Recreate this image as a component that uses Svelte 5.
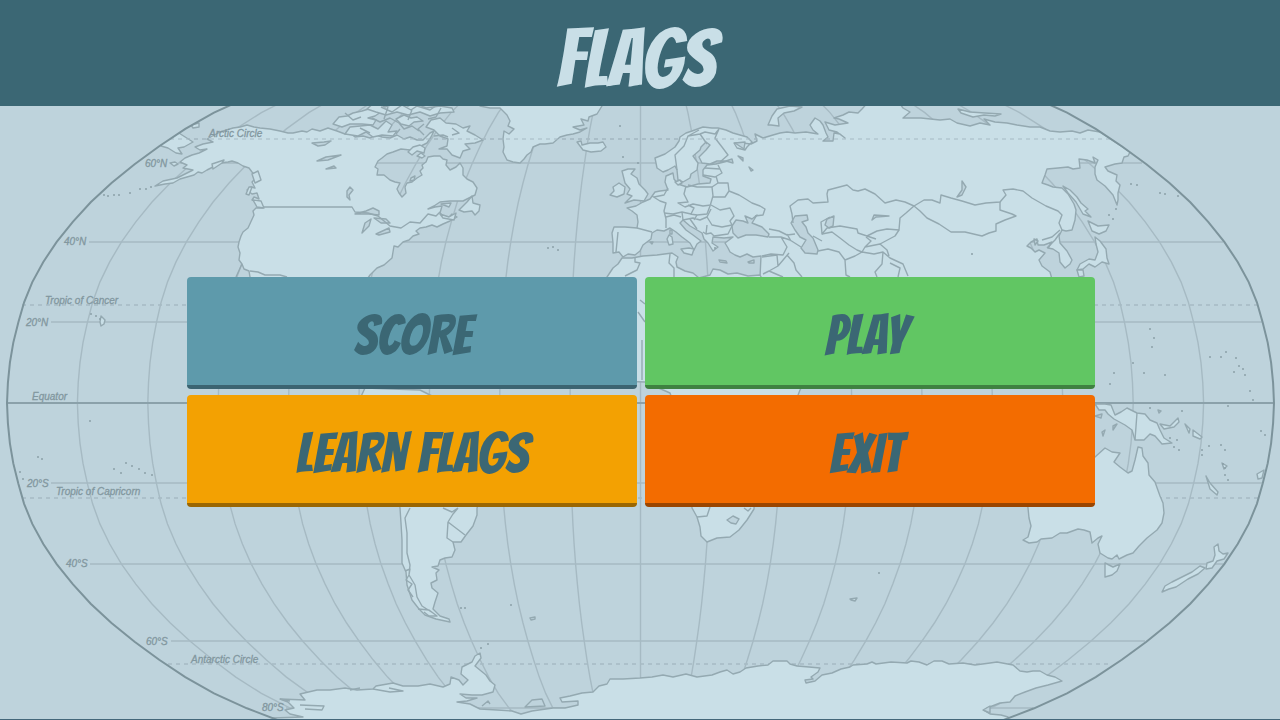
<script>
  const buttons = [
    { label: "Score", kind: "score" },
    { label: "Play", kind: "play" },
    { label: "Learn flags", kind: "learn" },
    { label: "Exit", kind: "exit" },
  ];

  let selected = $state("");

  // Robinson projection table, one entry per 5 degrees of latitude
  const lengths = [1, 0.9986, 0.9954, 0.99, 0.9822, 0.973, 0.96, 0.9427, 0.9216, 0.8962,
    0.8679, 0.835, 0.7986, 0.7597, 0.7186, 0.6732, 0.6213, 0.5722, 0.5322];
  const heights = [0, 0.062, 0.124, 0.186, 0.248, 0.31, 0.372, 0.434, 0.4958, 0.5571,
    0.6176, 0.6769, 0.7346, 0.7903, 0.8435, 0.8936, 0.9394, 0.9761, 1];
  const centerX = 640.5;
  const centerY = 403;

  function meridian(lon) {
    const points = [];
    for (let i = -18; i <= 18; i++) {
      const step = Math.abs(i);
      const x = centerX + (633.5 * lengths[step] * lon) / 180;
      const y = centerY + 325 * heights[step] * Math.sign(i);
      points.push(`${x.toFixed(1)} ${y.toFixed(1)}`);
    }
    return points;
  }

  const globe = "M" + meridian(-180).join("L") + "L" + meridian(180).reverse().join("L") + "Z";

  const meridians = [];
  for (let lon = -160; lon <= 160; lon += 20) {
    meridians.push("M" + meridian(lon).join("L"));
  }

  const parallels = [
    { y: 163, from: 178, to: 1142 },
    { y: 242, from: 89, to: 1223 },
    { y: 322, from: 51, to: 1262 },
    { y: 483, from: 51, to: 1262 },
    { y: 564, from: 90, to: 1224 },
    { y: 641, from: 171, to: 1145 },
    { y: 708, from: 286, to: 1033 },
  ];

  const circles = [
    { y: 139, from: 170, to: 1110 },
    { y: 305, from: 22, to: 1258 },
    { y: 498, from: 22, to: 1258 },
    { y: 664, from: 168, to: 1112 },
  ];

  const labels = [
    { text: "Arctic Circle", x: 209, y: 137 },
    { text: "60°N", x: 145, y: 167 },
    { text: "40°N", x: 64, y: 245 },
    { text: "Tropic of Cancer", x: 45, y: 304 },
    { text: "20°N", x: 26, y: 326 },
    { text: "Equator", x: 32, y: 400 },
    { text: "20°S", x: 27, y: 487 },
    { text: "Tropic of Capricorn", x: 56, y: 495 },
    { text: "40°S", x: 66, y: 567 },
    { text: "60°S", x: 146, y: 645 },
    { text: "Antarctic Circle", x: 191, y: 663 },
    { text: "80°S", x: 262, y: 711 },
  ];

  const land = [
    // North America
    "M233 128L240 127 247 125 254 127 260 128 270 129 280 131 288 133 293 133 302 131 307 132 312 129 320 131 328 128 337 131 345 134 350 133 355 137 363 136 370 138 376 135 382 137 390 138 397 135 404 139 410 137 417 140 423 140 430 133 434 131 431 137 427 143 419 147 410 150 401 149 393 152 387 154 382 158 378 161 375 167 378 169 377 175 384 175 390 180 395 182 400 183 397 189 399 193 402 197 406 193 405 187 407 183 412 182 417 178 422 175 420 171 423 168 422 165 426 162 428 157 434 156 440 156 443 159 447 160 446 165 450 170 456 167 460 163 463 168 463 175 467 179 473 182 477 188 475 195 469 198 463 201 450 201 440 202 434 206 428 209 435 207 442 206 440 213 444 217 448 218 452 214 457 217 450 221 443 224 437 227 432 225 426 227 420 228 416 231 419 234 413 236 409 240 403 242 398 247 394 246 393 252 392 258 384 265 377 268 370 275 360 290 260 290 250 277 249 271 244 269 242 264 239 260 240 253 238 247 239 242 241 236 243 232 248 228 254 215 253 211 256 208 263 208 260 203 252 200 254 197 259 199 257 193 252 194 247 190 251 187 255 188 252 182 257 177 252 172 249 168 243 166 238 163 232 161 228 162 220 163 213 167 207 170 202 173 198 172 194 175 187 177 180 179 173 183 165 184 155 186 163 181 177 178 185 174 193 170 183 168 187 165 180 162 185 158 192 155 199 153 207 149 200 150 195 147 203 144 213 142 207 139 220 132Z",
    // Arctic islands
    "M333 124L339 117 347 116 353 113 362 111 372 108 381 112 375 116 368 118 376 120 373 125 362 124 350 124 342 127Z",
    "M345 134L350 127 360 126 370 125 378 129 386 121 392 125 388 132 397 131 393 136 382 135 373 137 366 132 358 136Z",
    "M367 109L375 102 385 107 397 103 408 106 415 103 426 108 440 106 452 108 454 112 440 113 430 116 420 112 408 115 397 112 386 115 376 112Z",
    "M396 119L404 115 411 118 417 117 423 121 414 122 409 126 401 124Z",
    "M431 120L440 118 446 123 456 124 463 128 470 126 467 131 475 135 483 140 475 143 465 144 470 149 463 151 460 158 452 155 447 149 439 149 447 146 448 139 440 136 434 130 426 127Z",
    "M408 152L413 147 420 145 425 148 424 153 417 151 412 155Z",
    "M417 156L421 153 425 156 422 158ZM411 178L415 176 414 180 410 181Z",
    "M459 210L467 202 472 196 473 203 480 205 479 211 475 215 472 211 464 212Z",
    "M441 204L451 203 449 207ZM440 214L449 217 456 213 454 220 443 218Z",
    "M249 187L246 194 249 195 252 187ZM252 174L258 171 261 180 255 183ZM253 200L261 201 264 208 257 207Z",
    "M160 134L171 128 182 135 193 142 184 147 178 148 182 154 176 153 168 148 161 146Z",
    "M170 163L175 162 178 164 174 166ZM212 164L224 160 222 163 213 169ZM191 125L199 123 199 127 193 128Z",
    // Greenland, Iceland, British Isles
    "M480 106L490 108 500 108 507 115 510 121 508 126 514 129 509 134 504 131 503 139 504 147 503 152 507 160 513 162 520 163 524 159 527 155 531 152 533 147 540 144 545 144 553 143 560 137 567 135 573 134 580 132 587 128 580 130 573 127 584 125 581 119 588 121 589 117 597 114 602 106 603 100 480 100Z",
    "M577 142L581 141 582 145 590 143 598 143 603 142 606 147 601 151 591 152 583 150Z",
    "M622 171L628 169 635 169 631 174 637 178 639 184 645 190 648 194 644 201 634 200 625 203 632 196 627 194 630 189 625 183Z",
    "M613 187L619 183 625 187 624 194 617 197 610 195 614 191Z",
    // Europe and Asia
    "M655 158L665 154 675 147 679 141 680 137 686 133 692 131 703 127 712 128 718 128 726 130 733 133 747 137 752 142 747 147 745 150 737 148 734 143 742 143 751 144 757 141 755 134 763 138 773 135 780 133 787 132 795 133 806 132 818 134 813 130 810 125 815 118 820 121 823 125 826 133 828 137 823 141 833 141 834 133 840 134 845 138 837 132 829 130 825 122 835 125 848 123 839 119 834 118 843 115 849 112 858 113 862 109 870 100 897 100 903 108 910 112 903 118 921 118 940 120 950 119 957 123 970 126 980 123 990 125 984 119 995 122 1007 123 1017 125 1030 127 1040 127 1050 131 1060 132 1072 131 1080 133 1088 130 1100 132 1115 142 1130 152 1128 156 1124 157 1122 163 1115 164 1105 167 1108 171 1117 175 1116 181 1120 185 1118 193 1118 200 1117 205 1113 195 1105 186 1097 180 1095 174 1095 167 1098 160 1093 157 1095 163 1087 160 1079 159 1080 168 1073 169 1068 167 1058 168 1047 169 1045 175 1042 183 1048 185 1053 187 1062 188 1068 194 1074 204 1076 210 1075 220 1072 230 1066 231 1062 230 1059 236 1060 243 1067 251 1072 260 1070 264 1065 268 1060 262 1059 253 1053 249 1048 248 1052 242 1044 245 1038 245 1037 239 1031 242 1027 246 1031 248 1035 252 1039 250 1045 253 1039 260 1042 266 1050 272 1055 290 760 290 760 277 761 256 753 257 747 254 740 257 735 255 730 252 728 248 725 243 733 237 724 238 713 237 712 243 718 247 713 251 708 243 704 239 702 233 697 230 690 226 683 220 680 223 686 230 693 235 701 241 697 244 694 250 690 243 682 237 676 232 670 228 664 231 657 230 652 233 651 239 643 245 640 251 635 255 628 254 623 257 619 252 613 253 613 243 612 233 614 227 625 227 637 228 638 222 637 215 632 211 627 208 636 206 643 202 650 199 655 192 660 191 668 190 665 182 666 176 673 173 674 179 678 184 687 187 698 184 710 183 711 179 703 176 703 170 707 165 716 164 728 161 717 161 710 164 702 163 699 157 706 150 710 145 706 142 701 147 700 150 693 156 698 163 697 170 691 174 690 178 683 182 678 180 677 170 675 166 668 170 663 172 657 168 656 163Z",
    "M675 182L680 180 682 183 678 185ZM681 249L689 248 694 249 692 255 684 253ZM669 235L672 237 673 244 669 245 667 239ZM670 230L672 230 672 234 670 234Z",
    "M719 260L726 261 727 263 720 262ZM748 262L754 260 754 263 749 263ZM650 242L653 242 652 244Z",
    "M768 125L772 116 777 109 790 106 802 107 794 111 784 113 778 118 779 126 771 125Z",
    "M958 109L970 112 985 113 1001 114 995 116 984 115 973 117 961 113Z",
    // Sakhalin, Japan
    "M1063 186L1070 190 1077 197 1081 203 1088 209 1085 211 1091 217 1083 214 1076 202 1068 193Z",
    "M1088 221L1098 226 1109 225 1106 231 1099 234 1092 231Z",
    "M1095 237L1100 241 1106 249 1107 258 1109 264 1102 262 1095 267 1089 264 1083 269 1077 270 1080 264 1089 259 1095 260 1098 252 1096 244Z",
    "M1077 270L1083 270 1084 276 1079 277Z",
    // Africa
    "M607 277L613 268 618 264 622 258 632 258 643 256 657 255 672 253 678 257 676 262 677 267 685 271 693 273 699 278 710 275 713 269 720 270 728 274 737 273 748 276 760 275 790 330 826 345 800 390 777 450 755 482 754 509 747 520 739 530 730 537 717 538 707 542 701 536 700 527 697 517 692 508 690 450 670 393 645 382 590 380 565 330Z",
    // South America
    "M400 508L401 523 402 540 402 563 406 572 407 585 412 600 419 609 425 615 436 619 450 622 449 619 440 616 433 609 435 602 438 593 432 588 431 583 437 580 436 573 439 570 432 567 438 566 440 560 445 558 452 557 455 550 453 542 461 542 466 535 473 526 477 515 477 508 500 450 480 420 420 390 365 388 350 420 395 480Z",
    // Australia, Tasmania, New Zealand, New Guinea
    "M1028 508L1029 518 1031 526 1028 537 1023 540 1029 543 1037 542 1041 539 1052 538 1060 533 1067 533 1078 529 1084 530 1090 532 1092 543 1098 538 1102 536 1098 544 1100 553 1108 558 1112 559 1117 555 1119 559 1127 555 1133 553 1139 546 1147 538 1157 530 1162 523 1164 513 1163 503 1160 496 1155 482 1149 475 1148 463 1143 456 1142 448 1138 447 1135 460 1132 471 1128 473 1120 467 1114 462 1120 453 1112 452 1105 448 1095 457 1040 460 1025 490Z",
    "M1105 563L1113 567 1120 564 1117 571 1112 575 1105 577Z",
    "M1162 592L1165 586 1172 582 1184 576 1192 572 1200 566 1205 568 1198 574 1188 579 1176 587 1169 589Z",
    "M1206 569L1207 563 1213 561 1215 555 1214 547 1218 544 1219 551 1223 554 1228 553 1224 559 1217 561 1212 568Z",
    "M1095 404L1105 404 1111 405 1115 415 1121 412 1127 408 1137 413 1145 414 1150 420 1157 423 1160 430 1164 438 1172 443 1162 444 1155 436 1150 434 1144 440 1135 440 1132 430 1125 425 1114 419 1108 414 1105 410 1099 410Z",
    "M1160 424L1170 426 1178 418 1179 422 1174 427 1164 429ZM1185 424L1190 429 1189 433ZM1193 430L1202 437 1200 439 1193 436Z",
    // Antarctica
    "M268 725L272 718 303 717 290 714 285 710 294 708 288 702 280 699 305 700 300 694 317 690 330 690 345 688 357 690 373 689 376 686 393 683 403 686 418 686 430 684 443 687 450 684 451 677 459 680 463 685 468 680 461 674 462 667 472 662 475 656 480 653 481 658 475 666 486 675 490 681 495 685 493 692 482 695 472 695 460 694 466 698 477 698 467 701 457 702 470 704 480 709 497 710 512 711 521 714 532 711 553 708 565 708 578 705 578 701 562 702 560 698 570 696 582 693 593 692 599 686 607 684 610 679 623 679 640 678 652 677 663 675 673 677 686 674 697 677 712 675 720 672 727 670 733 674 740 672 746 668 758 666 768 665 773 661 787 661 790 664 797 666 809 667 820 668 818 672 811 677 813 679 805 680 806 683 815 681 822 675 832 673 841 669 850 667 853 665 867 664 872 662 876 664 891 662 907 663 911 661 919 662 927 665 934 661 942 661 949 664 963 663 975 665 990 663 997 662 1013 665 1020 671 1027 672 1033 671 1040 671 1047 675 1055 677 1062 681 1048 685 1036 688 1025 692 1015 696 1010 702 1000 703 987 708 985 711 990 714 1001 715 1008 717 1008 725Z",
  ];

  // Enclosed seas and lakes
  const water = [
    "M733 233L732 226 736 220 743 221 748 223 745 216 752 219 757 215 752 223 762 227 769 234 768 237 756 235 746 235 738 238Z",
    "M791 223L795 216 807 215 808 220 802 222 806 227 808 233 813 238 818 250 817 254 805 253 801 248 806 240 800 237 795 230Z",
    "M825 225L827 219 834 216 833 226 829 228Z",
    "M312 143L324 142 331 141 325 145 318 146ZM317 161L326 157 341 155 328 160ZM326 169L334 166 336 168Z",
    "M347 191L350 187 353 190 349 195 350 200 347 197ZM355 214L366 211 373 208 379 211 379 215 369 214ZM362 233L365 223 371 219 369 226ZM376 234L389 228 390 232 379 235ZM374 218L386 219 390 223 381 223Z",
    "M735 143L745 142 744 149ZM738 156L743 158 743 161ZM749 167L753 170 751 171ZM726 161L732 159 733 163Z",
    "M962 181L966 187 962 195 957 197 962 190ZM872 220L874 215 889 216 876 217ZM1034 239L1038 241 1035 245Z",
    "M727 520L733 516 739 519 736 524 731 523ZM983 710L990 706 990 713ZM525 707L532 700 542 699 545 706Z",
  ];

  const borders = [
    "M263 207L352 207 355 212 368 213 378 216 384 221 390 226 401 228 410 222 420 223 428 214 436 216 440 212",
    "M242 264L236 277M250 271L258 272 265 275 280 275 287 277",
    // Europe
    "M677 170L675 155 684 146 688 136 700 134 705 132 715 134 719 129M700 134L707 144M719 129L715 138 722 147 728 155 720 162M688 136L699 130M618 232L617 242 616 252M637 228L652 232M652 196L660 201 666 203 664 211 666 219 666 228",
    "M654 197L664 195 668 188M686 186L684 194 688 202 678 203 685 207 693 204 703 206 711 205M664 213L673 214 682 212 691 214 694 208 688 205M688 185L697 187 712 187 713 196 710 206 707 214 697 215 690 214",
    "M703 175L715 177 722 173 718 165M705 168L720 169M712 187L718 183 728 183 729 191 725 197 713 197M718 183L716 176M729 191L739 195 744 198 752 203 760 206 765 209 763 215 755 216M711 205L720 210 730 208 734 216 730 221 732 225 722 227 712 225 707 217 711 209",
    "M682 212L683 220 693 218 700 220 707 217M690 219L697 229M697 215L694 220M707 225L706 234 711 233 714 236 728 234 732 226M706 234L703 232M666 217L674 215 681 217",
    "M769 229L779 231 787 235 795 234M769 237L781 237 787 247 783 255 771 254 762 256M781 237L790 240 801 247M787 234L791 241",
    "M635 257L635 262 640 263 637 270 625 276M670 254L669 263 674 268 674 277M762 257L777 255 778 266 769 271 763 274M778 266L789 253M787 255L794 263 796 270 802 277M769 271L783 277",
    // Middle and Central Asia
    "M793 223L792 214 790 206 798 200 808 199 813 203 828 202 827 194 828 190 847 185 853 190 858 191 865 189 875 194 885 203 896 200 905 202 914 206 924 200 932 200 940 203 941 195 951 198 962 201 975 205 986 203 1000 202 1006 195 1003 190 1013 189 1023 191 1032 198 1046 206 1058 211 1062 215 1059 223 1062 230",
    "M1000 202L1000 210 1012 214 1016 216 1005 220 996 224 996 231 989 233 982 236 965 232 951 232 939 224 927 218 920 211 914 206 906 213 900 218 899 230 887 229 877 231 867 236 858 233 857 229 840 226 827 228 822 234 821 222 830 217",
    "M822 234L832 232 840 238 849 245 857 250 862 252 865 247 871 241 866 237M865 247L880 244 887 250 889 256M818 251L828 249 839 252 845 260 846 275 850 277M845 260L855 256 862 252 874 254 883 252 890 258 903 264 908 276M883 252L882 264 875 272 877 277M890 263L900 268 898 277M880 244L895 236 899 230M867 236L876 239",
    "M813 236L822 241M1047 248L1055 240 1060 233M1042 240L1052 237 1060 230",
    // South America and Africa
    "M410 508L405 518 407 533 407 553 410 565 409 575 415 585 417 597 422 606 433 613M448 522L465 535M448 522L447 538 453 542M448 522L453 514 458 508M443 508L452 512 458 508M405 571L410 569 409 575 406 580 412 584 408 590 413 597M418 609L429 610 437 616 429 616 424 612",
    "M697 517L707 516 710 507M744 508L748 511 751 508M1137 413L1135 440M1095 416L1102 414 1101 418ZM1102 432L1105 430 1103 436ZM1113 426L1117 424 1113 430Z",
    "M640 300L645 304M638 312L645 322M642 340L642 380",
    // Polar coast details
    "M300 705L324 706 322 710 305 709M360 688L350 690M373 689L390 692 403 691 389 688M482 706L488 701 490 704M280 699L290 701",
    "M345 113L353 120 361 117M381 107L392 112 402 105 411 110 417 106 430 110 437 105M360 128L370 133M434 136L443 135 448 137M372 118L380 122 390 118 399 123 404 129 412 126 419 131M400 129L396 134M424 124L418 129 424 135M452 128L459 133 452 135M388 107L384 119M412 110L408 120M441 108L436 117 428 119",
  ];

  // Small islands as dots
  const islets = [
    [104, 195], [108, 196], [114, 195], [119, 195], [130, 193], [140, 189], [146, 189], [151, 187],
    [91, 314], [96, 316], [100, 319], [90, 421], [38, 457], [42, 459], [20, 472], [23, 479],
    [114, 469], [121, 473], [126, 463], [132, 466], [139, 469], [145, 473], [152, 475],
    [548, 248], [553, 247], [558, 250], [589, 279], [620, 126], [623, 157], [638, 163], [715, 248],
    [972, 254], [1131, 184], [1137, 185], [1160, 193], [1165, 194], [1178, 196],
    [1150, 329], [1154, 338], [1152, 347], [1133, 363], [1114, 373], [1110, 384], [1144, 373],
    [1165, 375], [1210, 357], [1221, 357], [1226, 352], [1236, 358], [1239, 366], [1243, 369],
    [1234, 372], [1245, 375], [1250, 391], [1253, 400], [1228, 406], [1150, 408], [1182, 411],
    [1170, 438], [1177, 440], [1174, 447], [1179, 450], [1202, 450], [1209, 446], [1202, 455],
    [1221, 445], [1225, 450], [1223, 464], [1225, 468], [1225, 475], [1228, 480], [1261, 431],
    [1265, 435], [461, 608], [465, 608], [511, 605], [481, 648], [488, 644], [879, 573], [1109, 215],
    [1113, 219], [1116, 209],
  ];
</script>

<div class="page">
  <header>
    <h1>FLAGS</h1>
  </header>

  <main>
    <svg class="map" viewBox="0 106 1280 613" preserveAspectRatio="xMidYMin slice" aria-hidden="true">
      <defs>
        <clipPath id="globe">
          <path d={globe} />
        </clipPath>
      </defs>

      <g class="grid">
        {#each meridians as d}
          <path {d} />
        {/each}
        {#each parallels as line}
          <path d="M{line.from} {line.y}H{line.to}" />
        {/each}
        {#each circles as line}
          <path class="dashed" d="M{line.from} {line.y}H{line.to}" />
        {/each}
      </g>
      <path class="equator" d="M7 403H1274" />

      <g clip-path="url(#globe)">
        {#each land as d}
          <path class="land" {d} />
        {/each}
        {#each water as d}
          <path class="water" {d} />
        {/each}
        {#each borders as d}
          <path class="border" {d} />
        {/each}
      </g>

      <path class="dashed over" d="M170 139H1110" />
      <path class="land" d="M101 316L105 320 104 324 101 326 100 322Z" />
      <path class="land" d="M1206 476L1210 483 1218 492 1217 495 1210 489ZM1222 463L1227 466 1224 469ZM1257 474L1264 470 1262 478 1258 479ZM530 618L535 617 535 619 531 620ZM850 599L857 598 855 601 851 600ZM1158 410L1161 411 1159 413Z" />
      {#each islets as [x, y]}
        <circle class="islet" cx={x} cy={y} r="1" />
      {/each}

      <path class="outline" d={globe} />

      {#each labels as label}
        <text x={label.x} y={label.y}>{label.text}</text>
      {/each}
    </svg>

    <nav class="menu" aria-label="Main menu">
      {#each buttons as button}
        <button
          type="button"
          class={button.kind}
          class:active={selected === button.kind}
          onclick={() => (selected = button.kind)}
        >
          {button.label}
        </button>
      {/each}
    </nav>
  </main>
</div>

<style>
  :global(body) {
    margin: 0;
    background-color: #bed3dc;
  }

  .page {
    display: flex;
    flex-direction: column;
    min-height: 100vh;
    font-family: Bangers, Roboto, "Liberation Sans", sans-serif;
  }

  header {
    display: flex;
    align-items: center;
    justify-content: center;
    height: 106px;
    background-color: #3b6774;
  }

  h1 {
    margin: 0;
    padding: 12px 8px 0 0;
    font-size: 80px;
    line-height: 80px;
    font-weight: normal;
    color: #c9dfe7;
  }

  main {
    position: relative;
    display: flex;
    flex: 1;
    justify-content: center;
    align-items: flex-start;
    padding: 171px 0 64px 2px;
    box-sizing: border-box;
    overflow: hidden;
    border-bottom: 1px solid #44677a;
  }

  .map {
    position: absolute;
    inset: 0;
    width: 100%;
    height: 100%;
  }

  .grid path,
  .dashed {
    fill: none;
    stroke: #a6bac3;
    stroke-width: 1.4;
  }

  .grid .dashed,
  .dashed {
    stroke-dasharray: 4 4;
  }

  .over {
    opacity: 0.7;
  }

  .equator {
    fill: none;
    stroke: #8ba1aa;
    stroke-width: 2;
  }

  .land,
  .water,
  .border {
    stroke: #94a9b1;
    stroke-width: 1.4;
    stroke-linejoin: round;
  }

  .land {
    fill: #c9dfe7;
  }

  .water {
    fill: #bed3dc;
  }

  .border {
    fill: none;
  }

  .islet {
    fill: #8ba0a8;
  }

  .outline {
    fill: none;
    stroke: #7c939b;
    stroke-width: 2;
  }

  text {
    font-family: "Liberation Sans", Arial, sans-serif;
    font-size: 10px;
    font-style: italic;
    fill: #82979f;
    stroke: #82979f;
    stroke-width: 0.3;
  }

  .menu {
    position: relative;
    display: grid;
    grid-template-columns: 1fr 1fr;
    gap: 6px 8px;
    width: 71%;
  }

  button {
    height: 112px;
    padding: 8px 0 0;
    border: none;
    border-bottom: 4px solid;
    border-radius: 4px;
    font-family: inherit;
    font-size: 56px;
    font-weight: normal;
    text-transform: uppercase;
    color: #3b6774;
    cursor: pointer;
  }

  .score {
    background-color: #5e9aab;
    border-color: #3c6471;
  }

  .play {
    background-color: #61c663;
    border-color: #3f8141;
  }

  .learn {
    background-color: #f3a102;
    border-color: #9a6602;
  }

  .exit {
    background-color: #f36c00;
    border-color: #9a4500;
  }

  .play,
  .exit {
    padding-right: 8px;
  }

  button:hover,
  button.active {
    filter: brightness(1.05);
  }
</style>
